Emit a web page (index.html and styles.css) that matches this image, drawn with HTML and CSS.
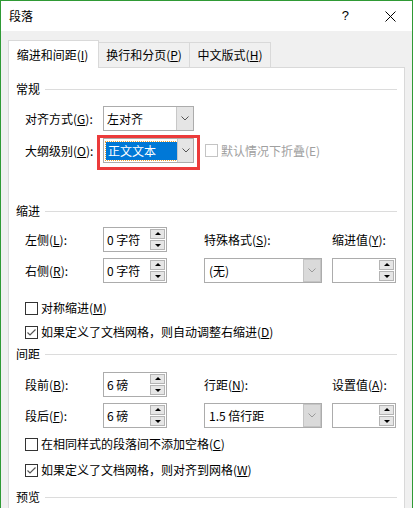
FILE: index.html
```html
<!DOCTYPE html>
<html lang="zh-CN">
<head>
    <meta charset="UTF-8">
    <meta name="viewport" content="width=device-width, initial-scale=1.0">
    <title>段落</title>
    <link rel="stylesheet" href="styles.css">
</head>
<body>

<div class="window">
    <div class="titlebar">
        <span class="title">段落</span>
        <span class="help">?</span>
        <span class="close">
            <svg width="11" height="11" viewBox="0 0 11 11"><path d="M0.5 0.5 L10.5 10.5 M10.5 0.5 L0.5 10.5" stroke="#000" stroke-width="1" fill="none"/></svg>
        </span>
    </div>

    <div class="dialog-body">
        <div class="tabs">
            <div class="tab active">缩进和间距(<u>I</u>)</div>
            <div class="tab">换行和分页(<u>P</u>)</div>
            <div class="tab last">中文版式(<u>H</u>)</div>
        </div>

        <div class="panel">
            <!-- 常规 -->
            <div class="group-title first">常规</div>
            <div class="row row-align">
                <span class="label">对齐方式(<u>G</u>):</span>
                <div class="select w-short">
                    <span class="value">左对齐</span>
                    <span class="drop"><svg width="8" height="5" viewBox="0 0 8 5"><polyline points="0.5,0.5 4,4 7.5,0.5" stroke="#555" fill="none"/></svg></span>
                </div>
            </div>
            <div class="row row-outline">
                <span class="label">大纲级别(<u>O</u>):</span>
                <div class="select w-short marked">
                    <span class="value"><span class="selected">正文文本</span></span>
                    <span class="drop"><svg width="8" height="5" viewBox="0 0 8 5"><polyline points="0.5,0.5 4,4 7.5,0.5" stroke="#555" fill="none"/></svg></span>
                    <div class="mark"></div>
                </div>
                <span class="check disabled"><span class="box"></span>默认情况下折叠(E)</span>
            </div>

            <!-- 缩进 -->
            <div class="group-title indent-title">缩进</div>
            <div class="row row-left">
                <span class="label">左侧(<u>L</u>):</span>
                <div class="spin">
                    <span class="value">0 字符</span>
                    <span class="btns"><span class="up"></span><span class="down"></span></span>
                </div>
                <span class="col3">特殊格式(<u>S</u>):</span>
                <span class="col4">缩进值(<u>Y</u>):</span>
            </div>
            <div class="row row-right">
                <span class="label">右侧(<u>R</u>):</span>
                <div class="spin">
                    <span class="value">0 字符</span>
                    <span class="btns"><span class="up"></span><span class="down"></span></span>
                </div>
                <div class="select col3 dim">
                    <span class="value">(无)</span>
                    <span class="drop"><svg width="8" height="5" viewBox="0 0 8 5"><polyline points="0.5,0.5 4,4 7.5,0.5" stroke="#9a9a9a" fill="none"/></svg></span>
                </div>
                <div class="spin col4">
                    <span class="value"></span>
                    <span class="btns"><span class="up"></span><span class="down"></span></span>
                </div>
            </div>
            <div class="check-row cb1">
                <span class="check"><span class="box"></span>对称缩进(<u>M</u>)</span>
            </div>
            <div class="check-row cb2">
                <span class="check"><span class="box on"><svg width="11" height="11" viewBox="0 0 11 11"><polyline points="1.5,5.5 4,8 9.5,2.5" stroke="#555" stroke-width="1.2" fill="none"/></svg></span>如果定义了文档网格，则自动调整右缩进(<u>D</u>)</span>
            </div>

            <!-- 间距 -->
            <div class="group-title spacing-title">间距</div>
            <div class="row row-before">
                <span class="label">段前(<u>B</u>):</span>
                <div class="spin">
                    <span class="value">6 磅</span>
                    <span class="btns"><span class="up"></span><span class="down"></span></span>
                </div>
                <span class="col3">行距(<u>N</u>):</span>
                <span class="col4">设置值(<u>A</u>):</span>
            </div>
            <div class="row row-after">
                <span class="label">段后(<u>F</u>):</span>
                <div class="spin">
                    <span class="value">6 磅</span>
                    <span class="btns"><span class="up"></span><span class="down"></span></span>
                </div>
                <div class="select col3 dim">
                    <span class="value">1.5 倍行距</span>
                    <span class="drop"><svg width="8" height="5" viewBox="0 0 8 5"><polyline points="0.5,0.5 4,4 7.5,0.5" stroke="#9a9a9a" fill="none"/></svg></span>
                </div>
                <div class="spin col4">
                    <span class="value"></span>
                    <span class="btns"><span class="up"></span><span class="down"></span></span>
                </div>
            </div>
            <div class="check-row cb3">
                <span class="check"><span class="box"></span>在相同样式的段落间不添加空格(<u>C</u>)</span>
            </div>
            <div class="check-row cb4">
                <span class="check"><span class="box on"><svg width="11" height="11" viewBox="0 0 11 11"><polyline points="1.5,5.5 4,8 9.5,2.5" stroke="#555" stroke-width="1.2" fill="none"/></svg></span>如果定义了文档网格，则对齐到网格(<u>W</u>)</span>
            </div>

            <!-- 预览 -->
            <div class="group-title preview-title">预览</div>
        </div>
    </div>
</div>

</body>
</html>
```

FILE: styles.css
```css
body {
    margin: 0;
    padding: 0;
    font-family: "Noto Sans CJK SC", "Noto Sans", sans-serif;
    font-size: 12px;
    line-height: 16px;
    color: #000;
    background: #fff;
}
u {
    text-decoration: underline;
    text-underline-offset: 1px;
}
.window {
    width: 413px;
    height: 508px;
    box-sizing: border-box;
    border: 1px solid #2f9a35;
    border-bottom: none;
    overflow: hidden;
    display: flex;
    flex-direction: column;
}
.titlebar {
    height: 30px;
    background: #fff;
    display: flex;
    align-items: center;
    padding: 0 16px 0 8px;
    flex-shrink: 0;
}
.title {
    flex: 1;
}
.help {
    font-family: "Liberation Sans", sans-serif;
    font-size: 13px;
    margin-right: 36px;
}
.close {
    display: flex;
}
.dialog-body {
    flex: 1;
    background: #f0f0f0;
    padding: 9px 7px 0 7px;
    display: flex;
    flex-direction: column;
}
.tabs {
    display: flex;
    align-items: flex-end;
    height: 27px;
    flex-shrink: 0;
}
.tab {
    height: 25px;
    box-sizing: border-box;
    border: 1px solid #d9d9d9;
    border-bottom: none;
    display: flex;
    align-items: center;
    justify-content: center;
    width: 92px;
    margin-left: -1px;
}
.tab.active {
    width: 91px;
    margin-left: 0;
    height: 28px;
    margin-bottom: -1px;
    background: #fff;
    position: relative;
    z-index: 1;
    padding-right: 2px;
}
.tab.last {
    width: 82px;
}
.panel {
    flex: 1;
    background: #fff;
    border: 1px solid #d9d9d9;
    border-bottom: none;
    padding: 0 7px;
}
.group-title {
    display: flex;
    align-items: center;
    height: 16px;
}
.group-title::after {
    content: "";
    flex: 1;
    height: 1px;
    background: #dcdcdc;
    margin-left: 5px;
}
.group-title.first { margin-top: 13px; }
.indent-title { margin-top: 40px; }
.spacing-title { margin-top: 6px; }
.preview-title { margin-top: 11px; }

.row {
    display: flex;
    align-items: center;
    height: 25px;
    padding-left: 9px;
}
.row-align { margin-top: 9px; }
.row-outline { margin-top: 7px; }
.row-left { margin-top: 8px; }
.row-right { margin-top: 6px; }
.row-before { margin-top: 10px; }
.row-after { margin-top: 6px; }

.label {
    width: 78px;
    flex-shrink: 0;
}
.col3 {
    margin-left: 37px;
    width: 118px;
}
.col4 {
    margin-left: 10px;
    width: 65px;
}

.select {
    height: 25px;
    box-sizing: border-box;
    border: 1px solid #acacac;
    display: flex;
    background: #fff;
    position: relative;
}
.select.w-short {
    width: 91px;
}
.select .value {
    flex: 1;
    display: flex;
    align-items: center;
    padding-left: 3px;
}
.select .drop {
    width: 16px;
    background: #e5e5e5;
    border-left: 1px solid #c8c8c8;
    display: flex;
    align-items: center;
    justify-content: center;
}
.select.dim .value {
    padding-left: 4px;
}
.select.dim .drop {
    background: #dadada;
    border: 1px solid #c4c4c4;
}
.selected {
    background: #0078d7;
    color: #fff;
    outline: 1px dotted #f0a030;
    padding: 1px 2px;
    margin-left: -1px;
    width: 67px;
}
.mark {
    position: absolute;
    left: -7px;
    top: -4px;
    right: -7px;
    bottom: -8px;
    border: 3px solid #ec3b3b;
}

.spin {
    width: 64px;
    height: 25px;
    box-sizing: border-box;
    border: 1px solid #acacac;
    display: flex;
    background: #fff;
}
.spin .value {
    flex: 1;
    display: flex;
    align-items: center;
    padding-left: 3px;
}
.spin .btns {
    width: 15px;
    display: flex;
    flex-direction: column;
    padding: 1px 1px 1px 0;
    gap: 1px;
}
.btns span {
    flex: 1;
    border: 1px solid #b4b4b4;
    background: #e6e6e6;
    position: relative;
}
.btns span::after {
    content: "";
    position: absolute;
    left: 50%;
    top: 50%;
    margin-left: -3px;
    border-left: 3px solid transparent;
    border-right: 3px solid transparent;
}
.btns .up::after {
    margin-top: -2px;
    border-bottom: 3px solid #000;
}
.btns .down::after {
    margin-top: -1px;
    border-top: 3px solid #000;
}

.check {
    display: flex;
    align-items: center;
}
.check .box {
    width: 13px;
    height: 13px;
    box-sizing: border-box;
    border: 1px solid #333;
    background: #fff;
    margin-right: 3px;
    display: flex;
    align-items: center;
    justify-content: center;
}
.check.disabled {
    margin-left: 11px;
    color: #a0a0a0;
}
.check.disabled .box {
    border-color: #c4c4c4;
}
.check-row {
    height: 16px;
    padding-left: 9px;
    display: flex;
    align-items: center;
}
.cb1 { margin-top: 17px; }
.cb2 { margin-top: 8px; }
.cb3 { margin-top: 8px; }
.cb4 { margin-top: 10px; }
```
